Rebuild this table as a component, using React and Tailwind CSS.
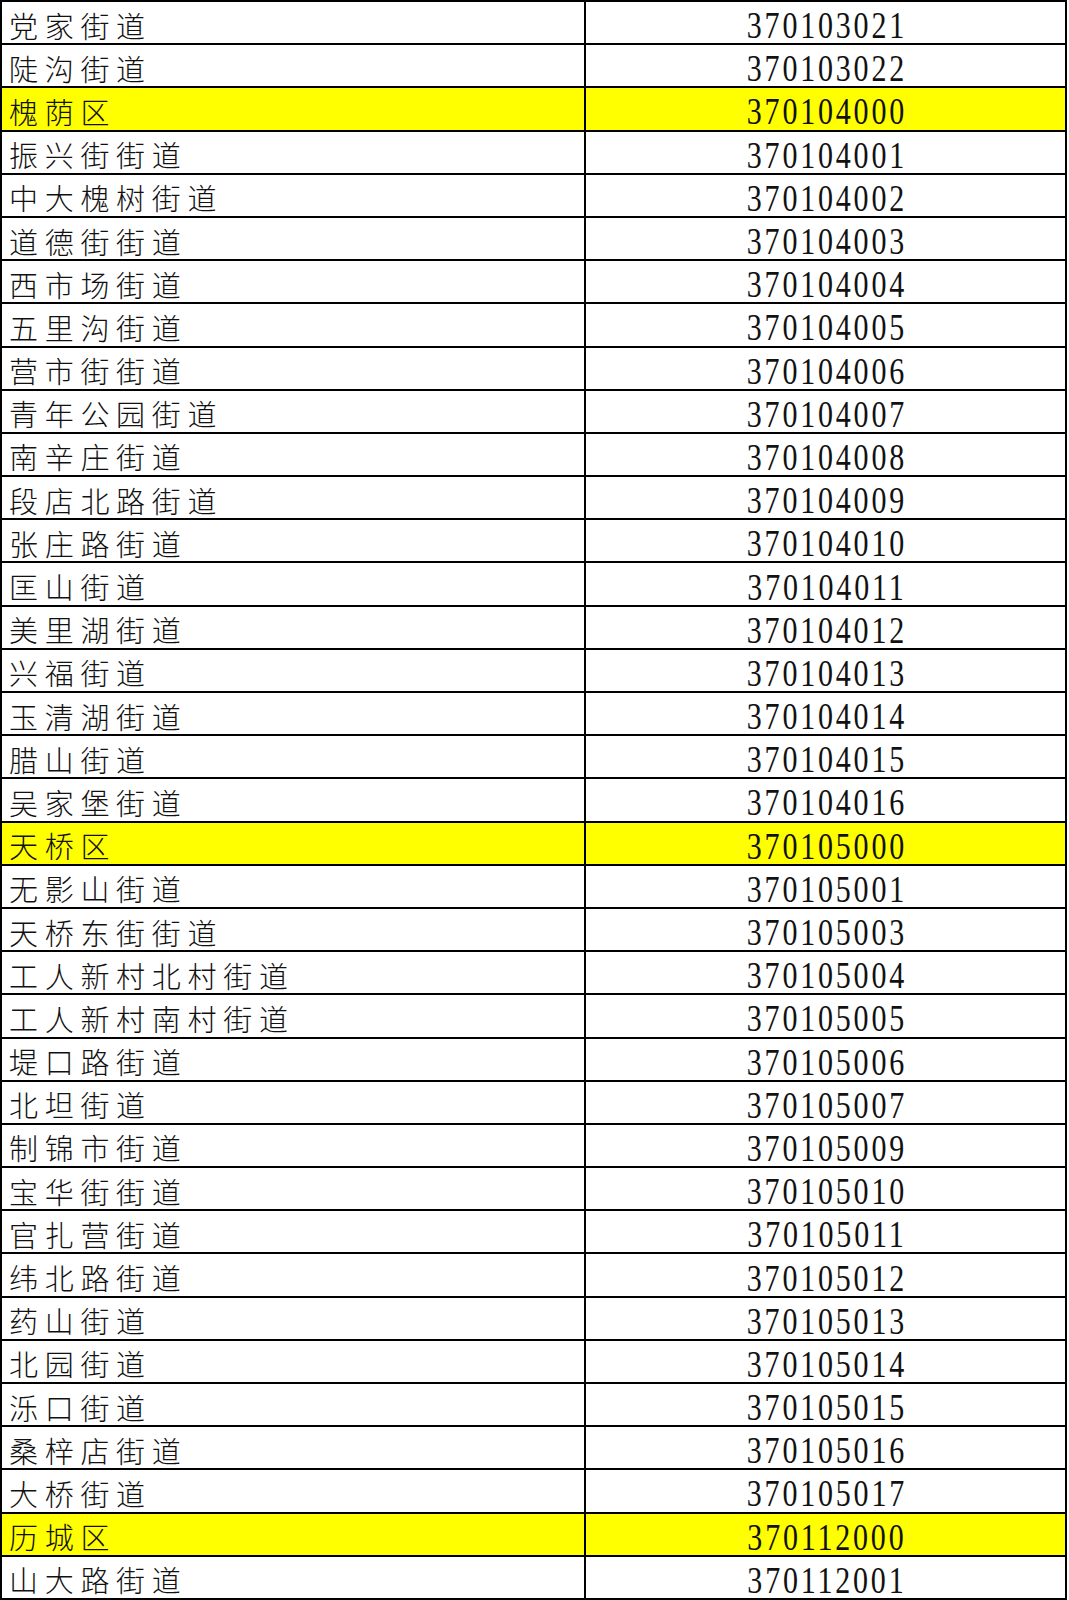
const rows = [
  ["党家街道", "370103021"],
  ["陡沟街道", "370103022"],
  ["槐荫区", "370104000", true],
  ["振兴街街道", "370104001"],
  ["中大槐树街道", "370104002"],
  ["道德街街道", "370104003"],
  ["西市场街道", "370104004"],
  ["五里沟街道", "370104005"],
  ["营市街街道", "370104006"],
  ["青年公园街道", "370104007"],
  ["南辛庄街道", "370104008"],
  ["段店北路街道", "370104009"],
  ["张庄路街道", "370104010"],
  ["匡山街道", "370104011"],
  ["美里湖街道", "370104012"],
  ["兴福街道", "370104013"],
  ["玉清湖街道", "370104014"],
  ["腊山街道", "370104015"],
  ["吴家堡街道", "370104016"],
  ["天桥区", "370105000", true],
  ["无影山街道", "370105001"],
  ["天桥东街街道", "370105003"],
  ["工人新村北村街道", "370105004"],
  ["工人新村南村街道", "370105005"],
  ["堤口路街道", "370105006"],
  ["北坦街道", "370105007"],
  ["制锦市街道", "370105009"],
  ["宝华街街道", "370105010"],
  ["官扎营街道", "370105011"],
  ["纬北路街道", "370105012"],
  ["药山街道", "370105013"],
  ["北园街道", "370105014"],
  ["泺口街道", "370105015"],
  ["桑梓店街道", "370105016"],
  ["大桥街道", "370105017"],
  ["历城区", "370112000", true],
  ["山大路街道", "370112001"],
];

export default function App() {
  return (
    <div className="w-[1069px] h-[1600px] bg-white overflow-hidden">
      <div className="w-[1067px] border-l-2 border-t-2 border-black">
        {rows.map(([name, code, hl]) => (
          <div
            key={code}
            className={`grid grid-cols-[584px_1fr] h-[43.2px] border-b-2 border-black ${hl ? "bg-[#ffff00]" : "bg-white"}`}
          >
            <div className="flex items-center pl-[7px] pt-[5px] border-r-2 border-black text-[29px] tracking-[6.7px] text-[#111] leading-none whitespace-nowrap font-['Noto_Sans_CJK_SC',sans-serif] font-light">
              {name}
            </div>
            <div className="flex items-center justify-center pt-[5px] border-r-2 border-black">
              <span className="inline-block scale-y-125 text-[30px] tracking-[2.8px] pl-[2.8px] leading-none text-[#111] font-['Liberation_Serif',serif]">
                {code}
              </span>
            </div>
          </div>
        ))}
      </div>
    </div>
  );
}
